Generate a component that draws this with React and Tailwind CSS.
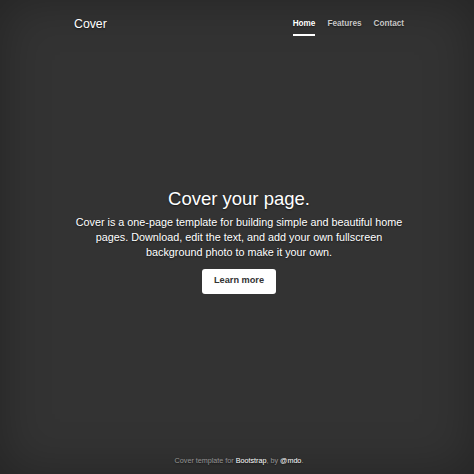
import React from "react";

const navLinks = [
  { label: "Home", active: true },
  { label: "Features" },
  { label: "Contact" },
];

export default function App() {
  return (
    <div className="h-[474px] w-full bg-[#333] text-white font-['Liberation_Sans',Arial,sans-serif] shadow-[inset_0_0_50px_rgba(0,0,0,0.3)] [text-shadow:0_0.5px_1.5px_rgba(0,0,0,0.5)] flex flex-col">
      <div className="w-[334px] mx-auto pl-[4px] h-full flex flex-col">
        {/* Masthead */}
        <header className="flex justify-between items-start pt-[17px]">
          <h3 className="text-[12.3px] leading-[1.1] mt-[1px]">Cover</h3>
          <nav className="flex gap-[12px] mt-[1px]">
            {navLinks.map((link) => (
              <a
                key={link.label}
                href="#"
                className={
                  "text-[8.2px] font-bold leading-[11.7px] pb-[4.5px] border-b-2 " +
                  (link.active
                    ? "text-white border-white"
                    : "text-white/75 border-transparent")
                }
              >
                {link.label}
              </a>
            ))}
          </nav>
        </header>

        {/* Inner cover */}
        <main className="flex-1 flex flex-col items-center justify-center text-center pb-[9px]">
          <h1 className="text-[18.5px] leading-[1.1]">Cover your page.</h1>
          <p className="text-[10.8px] leading-[15.1px] mt-[5.5px]">
            Cover is a one-page template for building simple and beautiful home
            pages. Download, edit the text, and add your own fullscreen
            background photo to make it your own.
          </p>
          <a
            href="#"
            className="mt-[8px] h-[25px] px-[11.5px] flex items-center bg-white text-[#333] text-[9.2px] font-bold rounded-[3px] [text-shadow:none]"
          >
            Learn more
          </a>
        </main>

        {/* Footer */}
        <footer className="text-center text-[7.2px] leading-[10.3px] pb-[8px] text-white/50">
          Cover template for{" "}
          <a href="#" className="text-white">
            Bootstrap
          </a>
          , by{" "}
          <a href="#" className="text-white">
            @mdo
          </a>
          .
        </footer>
      </div>
    </div>
  );
}
